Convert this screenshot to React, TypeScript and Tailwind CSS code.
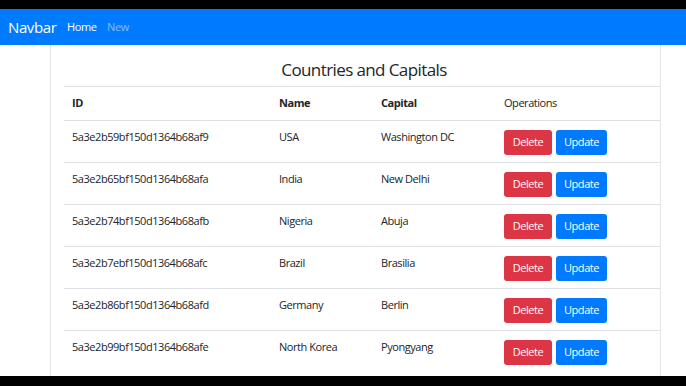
import React from "react";

const rows = [
  ["5a3e2b59bf150d1364b68af9", "USA", "Washington DC"],
  ["5a3e2b65bf150d1364b68afa", "India", "New Delhi"],
  ["5a3e2b74bf150d1364b68afb", "Nigeria", "Abuja"],
  ["5a3e2b7ebf150d1364b68afc", "Brazil", "Brasilia"],
  ["5a3e2b86bf150d1364b68afd", "Germany", "Berlin"],
  ["5a3e2b99bf150d1364b68afe", "North Korea", "Pyongyang"],
];

export default function App() {
  return (
    <div
      className="w-[686px] h-[386px] bg-black flex flex-col overflow-hidden"
      style={{ fontFamily: '"Open Sans", "Noto Sans", sans-serif' }}
    >
      <div className="h-[9px] bg-black" />
      <div className="h-[36px] bg-[#007bff] flex items-center px-[8px] text-white">
        <span className="text-[15px] tracking-[-0.4px] w-[59px]">Navbar</span>
        <span className="text-[11px] tracking-[-0.4px] w-[40px]">Home</span>
        <span className="text-[11px] tracking-[-0.4px] text-white/50">New</span>
      </div>
      <div className="h-[331px] bg-white flex">
        <div className="w-[50px]" />
        <div className="w-[611px] border-l border-r border-[#e4e4e4] pl-[13px] flex flex-col">
          <div className="h-[41px] flex items-center justify-center text-[17px] tracking-[-0.6px] text-[#212529] pt-[8px] pl-[4px]">
            Countries and Capitals
          </div>
          <div className="border-t border-[#dee2e6] h-[34px] flex items-center text-[11px] tracking-[-0.45px] text-[#212529]">
            <div className="w-[207px] pl-[8px] font-bold">ID</div>
            <div className="w-[102px] pl-[8px] font-bold">Name</div>
            <div className="w-[123px] pl-[8px] font-bold">Capital</div>
            <div className="pl-[8px]">Operations</div>
          </div>
          {rows.map((r) => (
            <div
              key={r[0]}
              className="border-t border-[#dee2e6] h-[42px] flex items-center text-[11px] tracking-[-0.45px] text-[#212529]"
            >
              <div className="w-[207px] pl-[8px] -mt-[8px]">{r[0]}</div>
              <div className="w-[102px] pl-[8px] -mt-[8px]">{r[1]}</div>
              <div className="w-[123px] pl-[8px] -mt-[8px]">{r[2]}</div>
              <div className="pl-[8px] flex gap-[4px] mt-[2px]">
                <button className="w-[48px] h-[25px] rounded-[3px] bg-[#dc3545] text-white text-[11px] tracking-[-0.45px]">
                  Delete
                </button>
                <button className="w-[51px] h-[25px] rounded-[3px] bg-[#007bff] text-white text-[11px] tracking-[-0.45px]">
                  Update
                </button>
              </div>
            </div>
          ))}
        </div>
      </div>
      <div className="flex-1 bg-black" />
    </div>
  );
}
